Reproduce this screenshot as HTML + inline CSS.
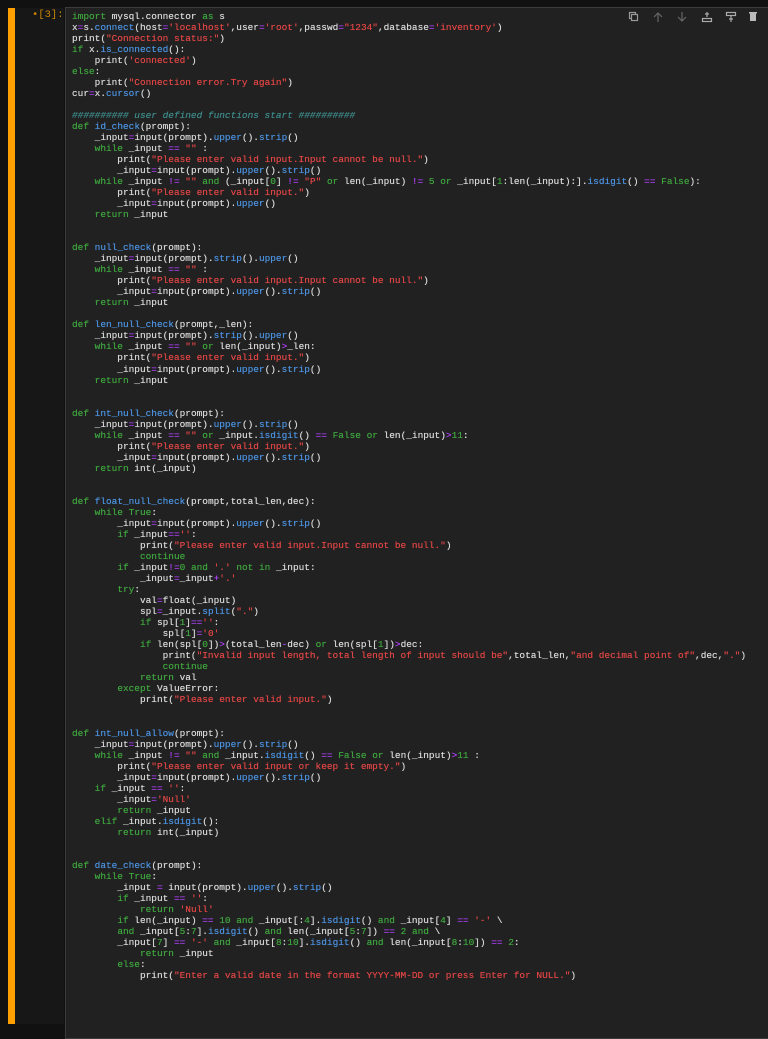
<!DOCTYPE html>
<html><head><meta charset="utf-8"><style>
html,body{margin:0;padding:0;background:#111;width:768px;height:1024px;overflow:hidden}
.bar{position:absolute;left:8px;top:8px;width:7px;height:1016px;background:#ffa000}
.gut{position:absolute;left:15px;top:8px;width:49px;height:1016px;background:#171717}
.prompt{position:absolute;left:32px;top:10px;font:10.5px/11px "Liberation Mono",monospace;color:#c98500}
.cell{position:absolute;left:65px;top:7px;width:710px;height:1030px;background:#212121;border:1px solid #3c3c3c}
pre{position:absolute;left:72px;top:10.5px;margin:0;font:9.45px/11.03px "Liberation Mono",monospace;color:#dadada;white-space:pre;text-shadow:0 0 0.4px currentColor}
.k{color:#3ea53e}.s{color:#e04545}.f{color:#4b92e0}.o{color:#b040ff}.n{color:#3ea53e}.c{color:#3e8b8b;font-style:italic}
</style></head><body>
<div class="bar"></div><div class="gut"></div>
<div class="prompt">•[3]:</div>
<div class="cell"></div>
<svg style="position:absolute;left:628px;top:10px" width="136" height="14" viewBox="0 0 136 14">
<g fill="none" stroke="#999" stroke-width="1.2">
<rect x="1.5" y="2.5" width="6" height="6"/><rect x="3.5" y="4.5" width="6" height="6" fill="#212121"/>
</g>
<g fill="none" stroke="#666" stroke-width="1.2"><path d="M30 12V3M26 7l4-4 4 4"/><path d="M54 2v9M50 7l4 4 4-4"/></g>
<g fill="none" stroke="#aaa" stroke-width="1.2"><rect x="74.5" y="8.5" width="9" height="3"/><path d="M79 2v5M77 4h4"/>
<rect x="98.5" y="2.5" width="9" height="3"/><path d="M103 6v6M101 9h4"/></g>
<rect x="122" y="3" width="6" height="8" fill="#bbb"/><rect x="121" y="2" width="8" height="1.5" fill="#bbb"/>
</svg>
<pre><span class="k">import</span> mysql.connector <span class="k">as</span> s
x<span class="o">=</span>s.<span class="f">connect</span>(host<span class="o">=</span><span class="s">'localhost'</span>,user<span class="o">=</span><span class="s">'root'</span>,passwd<span class="o">=</span><span class="s">"1234"</span>,database<span class="o">=</span><span class="s">'inventory'</span>)
print(<span class="s">"Connection status:"</span>)
<span class="k">if</span> x.<span class="f">is_connected</span>():
    print(<span class="s">'connected'</span>)
<span class="k">else</span>:
    print(<span class="s">"Connection error.Try again"</span>)
cur<span class="o">=</span>x.<span class="f">cursor</span>()

<span class="c">########## user defined functions start ##########</span>
<span class="k">def</span> <span class="f">id_check</span>(prompt):
    _input<span class="o">=</span>input(prompt).<span class="f">upper</span>().<span class="f">strip</span>()
    <span class="k">while</span> _input <span class="o">==</span> <span class="s">""</span> :
        print(<span class="s">"Please enter valid input.Input cannot be null."</span>)
        _input<span class="o">=</span>input(prompt).<span class="f">upper</span>().<span class="f">strip</span>()
    <span class="k">while</span> _input <span class="o">!=</span> <span class="s">""</span> <span class="k">and</span> (_input[<span class="n">0</span>] <span class="o">!=</span> <span class="s">"P"</span> <span class="k">or</span> len(_input) <span class="o">!=</span> <span class="n">5</span> <span class="k">or</span> _input[<span class="n">1</span>:len(_input):].<span class="f">isdigit</span>() <span class="o">==</span> <span class="k">False</span>):
        print(<span class="s">"Please enter valid input."</span>)
        _input<span class="o">=</span>input(prompt).<span class="f">upper</span>()
    <span class="k">return</span> _input


<span class="k">def</span> <span class="f">null_check</span>(prompt):
    _input<span class="o">=</span>input(prompt).<span class="f">strip</span>().<span class="f">upper</span>()
    <span class="k">while</span> _input <span class="o">==</span> <span class="s">""</span> :
        print(<span class="s">"Please enter valid input.Input cannot be null."</span>)
        _input<span class="o">=</span>input(prompt).<span class="f">upper</span>().<span class="f">strip</span>()
    <span class="k">return</span> _input

<span class="k">def</span> <span class="f">len_null_check</span>(prompt,_len):
    _input<span class="o">=</span>input(prompt).<span class="f">strip</span>().<span class="f">upper</span>()
    <span class="k">while</span> _input <span class="o">==</span> <span class="s">""</span> <span class="k">or</span> len(_input)<span class="o">&gt;</span>_len:
        print(<span class="s">"Please enter valid input."</span>)
        _input<span class="o">=</span>input(prompt).<span class="f">upper</span>().<span class="f">strip</span>()
    <span class="k">return</span> _input


<span class="k">def</span> <span class="f">int_null_check</span>(prompt):
    _input<span class="o">=</span>input(prompt).<span class="f">upper</span>().<span class="f">strip</span>()
    <span class="k">while</span> _input <span class="o">==</span> <span class="s">""</span> <span class="k">or</span> _input.<span class="f">isdigit</span>() <span class="o">==</span> <span class="k">False</span> <span class="k">or</span> len(_input)<span class="o">&gt;</span><span class="n">11</span>:
        print(<span class="s">"Please enter valid input."</span>)
        _input<span class="o">=</span>input(prompt).<span class="f">upper</span>().<span class="f">strip</span>()
    <span class="k">return</span> int(_input)


<span class="k">def</span> <span class="f">float_null_check</span>(prompt,total_len,dec):
    <span class="k">while</span> <span class="k">True</span>:
        _input<span class="o">=</span>input(prompt).<span class="f">upper</span>().<span class="f">strip</span>()
        <span class="k">if</span> _input<span class="o">==</span><span class="s">''</span>:
            print(<span class="s">"Please enter valid input.Input cannot be null."</span>)
            <span class="k">continue</span>
        <span class="k">if</span> _input<span class="o">!=</span><span class="n">0</span> <span class="k">and</span> <span class="s">'.'</span> <span class="k">not in</span> _input:
            _input<span class="o">=</span>_input<span class="o">+</span><span class="s">'.'</span>
        <span class="k">try</span>:
            val<span class="o">=</span>float(_input)
            spl<span class="o">=</span>_input.<span class="f">split</span>(<span class="s">"."</span>)
            <span class="k">if</span> spl[<span class="n">1</span>]<span class="o">==</span><span class="s">''</span>:
                spl[<span class="n">1</span>]<span class="o">=</span><span class="s">'0'</span>
            <span class="k">if</span> len(spl[<span class="n">0</span>])<span class="o">&gt;</span>(total_len<span class="o">-</span>dec) <span class="k">or</span> len(spl[<span class="n">1</span>])<span class="o">&gt;</span>dec:
                print(<span class="s">"Invalid input length, total length of input should be"</span>,total_len,<span class="s">"and decimal point of"</span>,dec,<span class="s">"."</span>)
                <span class="k">continue</span>
            <span class="k">return</span> val
        <span class="k">except</span> ValueError:
            print(<span class="s">"Please enter valid input."</span>)


<span class="k">def</span> <span class="f">int_null_allow</span>(prompt):
    _input<span class="o">=</span>input(prompt).<span class="f">upper</span>().<span class="f">strip</span>()
    <span class="k">while</span> _input <span class="o">!=</span> <span class="s">""</span> <span class="k">and</span> _input.<span class="f">isdigit</span>() <span class="o">==</span> <span class="k">False</span> <span class="k">or</span> len(_input)<span class="o">&gt;</span><span class="n">11</span> :
        print(<span class="s">"Please enter valid input or keep it empty."</span>)
        _input<span class="o">=</span>input(prompt).<span class="f">upper</span>().<span class="f">strip</span>()
    <span class="k">if</span> _input <span class="o">==</span> <span class="s">''</span>:
        _input<span class="o">=</span><span class="s">'Null'</span>
        <span class="k">return</span> _input
    <span class="k">elif</span> _input.<span class="f">isdigit</span>():
        <span class="k">return</span> int(_input)


<span class="k">def</span> <span class="f">date_check</span>(prompt):
    <span class="k">while</span> <span class="k">True</span>:
        _input <span class="o">=</span> input(prompt).<span class="f">upper</span>().<span class="f">strip</span>()
        <span class="k">if</span> _input <span class="o">==</span> <span class="s">''</span>:
            <span class="k">return</span> <span class="s">'Null'</span>
        <span class="k">if</span> len(_input) <span class="o">==</span> <span class="n">10</span> <span class="k">and</span> _input[:<span class="n">4</span>].<span class="f">isdigit</span>() <span class="k">and</span> _input[<span class="n">4</span>] <span class="o">==</span> <span class="s">'-'</span> \
        <span class="k">and</span> _input[<span class="n">5</span>:<span class="n">7</span>].<span class="f">isdigit</span>() <span class="k">and</span> len(_input[<span class="n">5</span>:<span class="n">7</span>]) <span class="o">==</span> <span class="n">2</span> <span class="k">and</span> \
        _input[<span class="n">7</span>] <span class="o">==</span> <span class="s">'-'</span> <span class="k">and</span> _input[<span class="n">8</span>:<span class="n">10</span>].<span class="f">isdigit</span>() <span class="k">and</span> len(_input[<span class="n">8</span>:<span class="n">10</span>]) <span class="o">==</span> <span class="n">2</span>:
            <span class="k">return</span> _input
        <span class="k">else</span>:
            print(<span class="s">"Enter a valid date in the format YYYY-MM-DD or press Enter for NULL."</span>)</pre>
</body></html>
